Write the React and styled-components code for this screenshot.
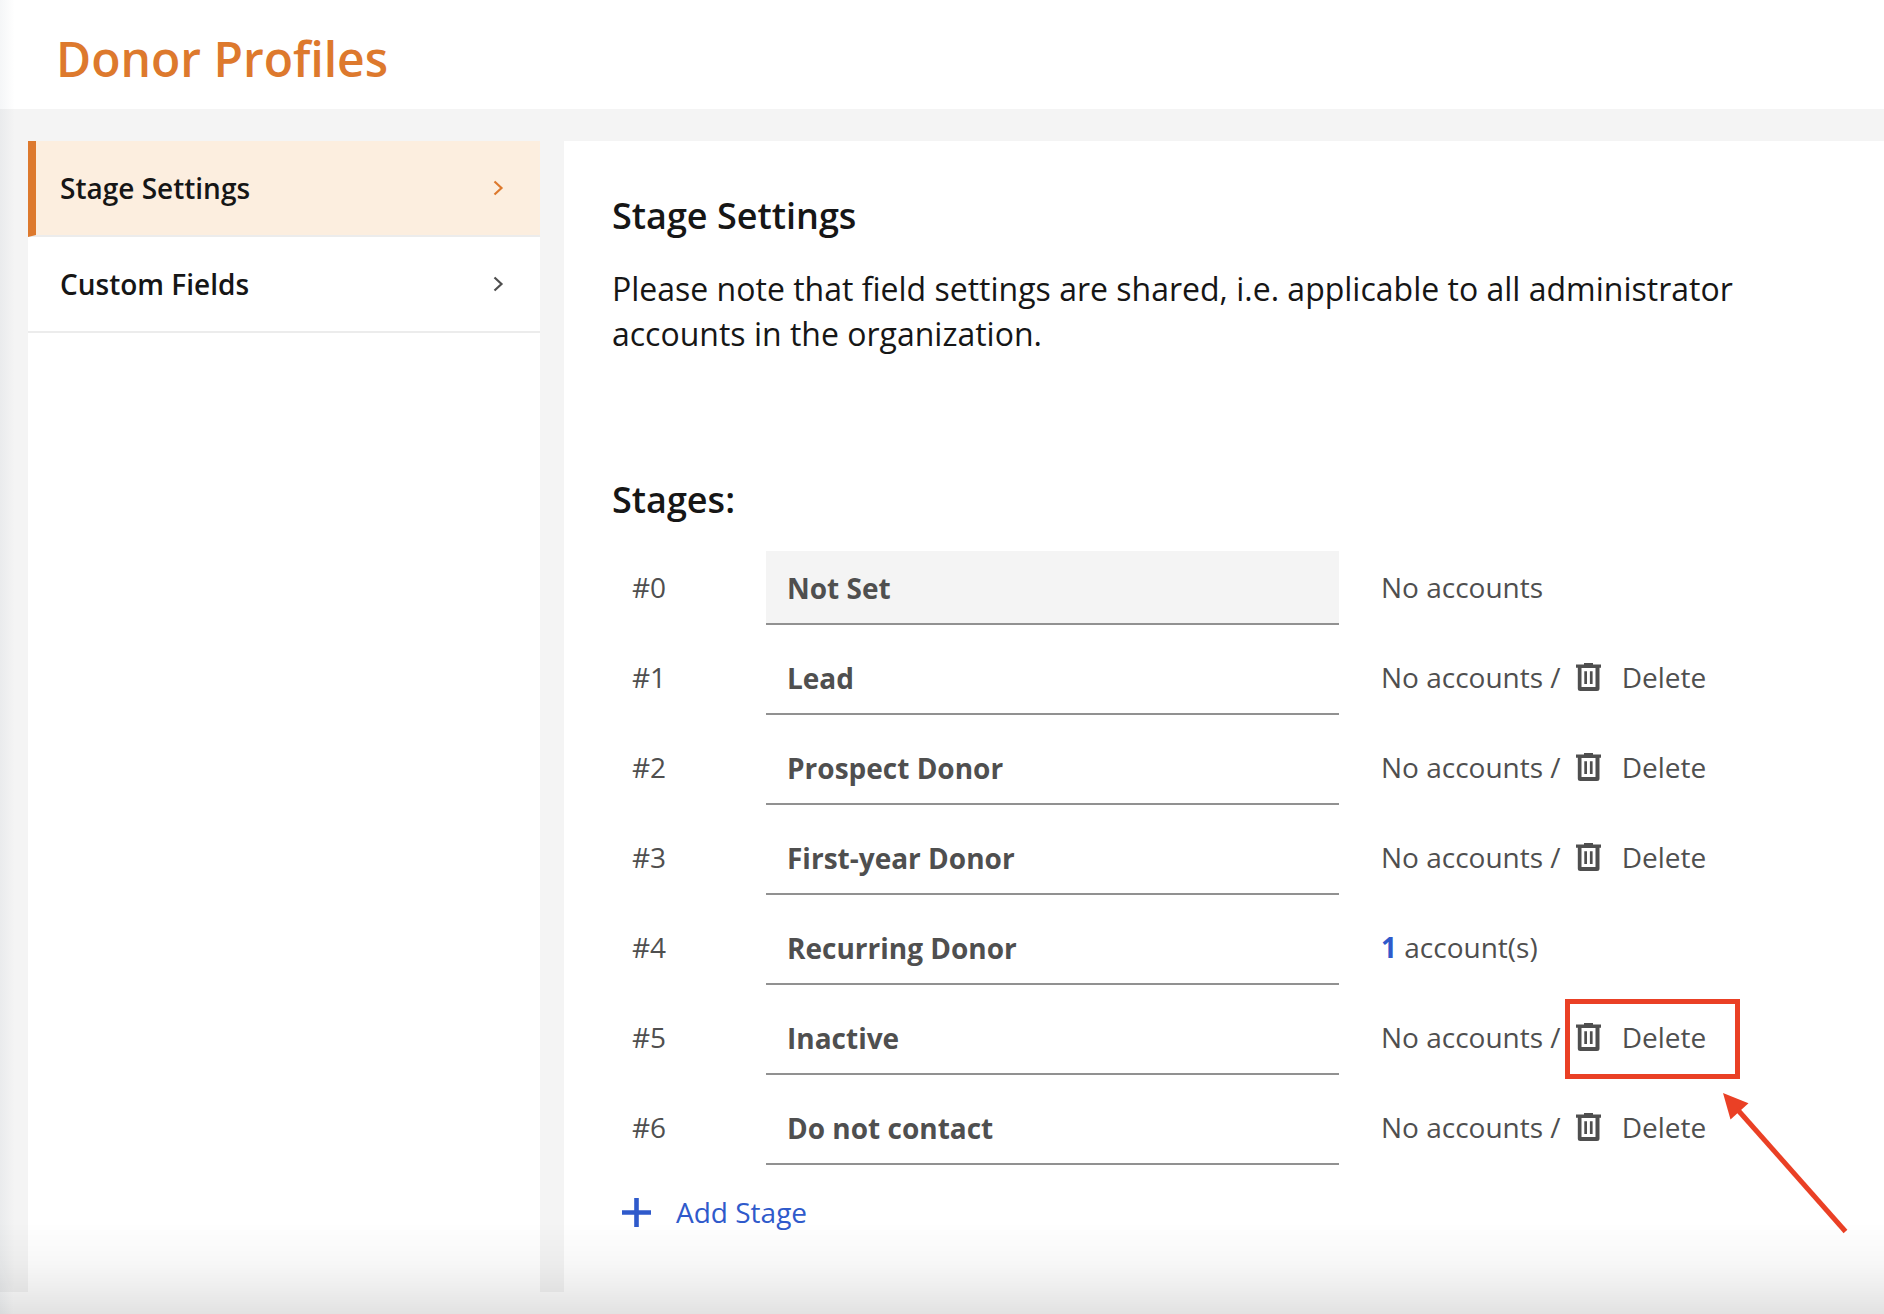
import React, { useState } from "react";
import styled, { createGlobalStyle } from "styled-components";

const color = {
  orange: "#dd792d",
  orangePale: "#fceedf",
  page: "#f4f4f4",
  ink: "#161616",
  text: "#4f4f4f",
  rule: "#919191",
  divider: "#ececec",
  blue: "#2f5acb",
  red: "#ea4025",
};

const GlobalStyle = createGlobalStyle`
  *, *::before, *::after { box-sizing: border-box; }
  body {
    margin: 0;
    background: #fff;
    color: ${color.ink};
    font-family: "Open Sans", "Noto Sans", sans-serif;
    font-size: 28px;
  }
  button, input { font: inherit; }
`;

const Page = styled.div`
  display: flex;
  flex-direction: column;
  min-height: 100vh;
  padding-bottom: 22px;
`;

/* Soft shadows cast on the content by the surrounding app frame. */
const FrameShadow = styled.div`
  position: fixed;
  inset: 0;
  pointer-events: none;
  background:
    linear-gradient(to right, rgba(70, 95, 120, 0.06), rgba(70, 95, 120, 0) 14px),
    linear-gradient(
      to top,
      rgba(0, 0, 0, 0.115),
      rgba(0, 0, 0, 0.075) 22px,
      rgba(0, 0, 0, 0.03) 50px,
      rgba(0, 0, 0, 0) 92px
    );
`;

const Header = styled.header`
  padding: 35px 56px 26px;
`;

const PageTitle = styled.h1`
  margin: 0;
  color: ${color.orange};
  font-size: 48px;
  font-weight: 600;
  line-height: 48px;
`;

const Body = styled.div`
  flex: 1;
  display: grid;
  grid-template-columns: 512px minmax(0, 1fr);
  gap: 24px;
  padding: 32px 0 0 28px;
  background: ${color.page};
`;

const SideNav = styled.nav`
  background: #fff;
`;

const NavLink = styled.a`
  display: flex;
  align-items: center;
  justify-content: space-between;
  height: 96px;
  padding: 0 36px 0 ${(p) => (p.$active ? 24 : 32)}px;
  border-left: ${(p) => (p.$active ? `8px solid ${color.orange}` : "0")};
  border-bottom: 2px solid ${color.divider};
  background: ${(p) => (p.$active ? color.orangePale : "#fff")};
  color: ${color.ink};
  font-weight: 600;
  text-decoration: none;

  svg {
    color: ${(p) => (p.$active ? color.orange : color.text)};
  }
`;

const Panel = styled.main`
  padding: 51px 48px 56px;
  background: #fff;
`;

const SectionTitle = styled.h2`
  margin: 0;
  font-size: 36px;
  font-weight: 600;
  line-height: 48px;
`;

const Note = styled.p`
  margin: 26px 0 120px;
  font-size: 32px;
  line-height: 45px;
`;

const StageTable = styled.table`
  width: 100%;
  margin-top: 27px;
  border-collapse: collapse;
  table-layout: fixed;
  color: ${color.text};
`;

const IndexCol = styled.col`
  width: 154px;
`;

const NameCol = styled.col`
  width: 573px;
`;

const Cell = styled.td`
  height: 90px;
  padding: 0 0 0 ${(p) => p.$indent || 0}px;
  vertical-align: top;
  line-height: 72px;
  white-space: nowrap;
`;

const StageInput = styled.input`
  display: block;
  width: 100%;
  height: 74px;
  padding: 2px 21px 0;
  border: 0;
  border-bottom: 2px solid ${color.rule};
  border-radius: 0;
  outline: 0;
  background: #fff;
  color: ${color.text};
  font-weight: 700;

  &:disabled {
    background: ${color.page};
    opacity: 1;
  }
`;

const Usage = styled.div`
  display: flex;
  align-items: center;
  gap: 15px;
  height: 72px;
`;

const AccountLink = styled.a`
  color: ${color.blue};
  font-weight: 700;
  text-decoration: none;
`;

const DeleteButton = styled.button`
  display: flex;
  align-items: center;
  gap: 21px;
  padding: 0;
  border: 0;
  background: none;
  color: inherit;
  line-height: 40px;
  cursor: pointer;
`;

const Spotlit = styled.div`
  position: relative;
`;

const SpotlightBox = styled.span`
  position: absolute;
  top: -18px;
  left: -11px;
  width: 175px;
  height: 80px;
  border: 5px solid ${color.red};
  pointer-events: none;
`;

const SpotlightArrow = styled.svg`
  position: absolute;
  top: 76px;
  left: 147px;
  pointer-events: none;
`;

const AddButton = styled.button`
  display: flex;
  align-items: center;
  gap: 25px;
  height: 48px;
  margin-top: 7px;
  padding: 0 10px;
  border: 0;
  background: none;
  color: ${color.blue};
  cursor: pointer;
`;

const Chevron = () => (
  <svg width="12" height="16" viewBox="0 0 12 16" fill="none" aria-hidden="true">
    <path d="M2.500 1.500 9.500 8l-7 6.500" stroke="currentColor" strokeWidth="2.200" />
  </svg>
);

const TrashIcon = () => (
  <svg width="25" height="28" viewBox="0 0 25 28" fill="currentColor" aria-hidden="true">
    <path
      fillRule="evenodd"
      d="M8 0h9v1.500h8v3.200h-1.500V25.500a2.500 2.500 0 0 1-2.500 2.500H4.300a2.500 2.500 0 0 1-2.500-2.500V4.700H0V1.500h8zM5.500 5v19h14V5z"
    />
    <path d="M8.300 8.200h2.700v12.800H8.300zM13.900 8.200h2.700v12.800h-2.700z" />
  </svg>
);

const PlusIcon = () => (
  <svg width="29" height="29" viewBox="0 0 29 29" fill="currentColor" aria-hidden="true">
    <path d="M12.200 0h4.600v12.200H29v4.600H16.800V29h-4.600V16.800H0v-4.600h12.200z" />
  </svg>
);

const Arrow = () => (
  <SpotlightArrow width="130" height="146" viewBox="0 0 130 146" aria-hidden="true">
    <path d="M0 0 25.500 10.300 7.500 26.500z" fill={color.red} />
    <path d="M14 16 122.500 138.500" stroke={color.red} strokeWidth="5" />
  </SpotlightArrow>
);

const initialStages = [
  { name: "Not Set", accounts: 0, locked: true },
  { name: "Lead", accounts: 0 },
  { name: "Prospect Donor", accounts: 0 },
  { name: "First-year Donor", accounts: 0 },
  { name: "Recurring Donor", accounts: 1 },
  { name: "Inactive", accounts: 0, spotlight: true },
  { name: "Do not contact", accounts: 0 },
];

function StageUsage({ stage, onDelete }) {
  if (stage.accounts > 0) {
    return (
      <Usage>
        <span>
          <AccountLink href="#accounts">{stage.accounts}</AccountLink> account(s)
        </span>
      </Usage>
    );
  }
  if (stage.locked) {
    return <Usage>No accounts</Usage>;
  }
  const button = (
    <DeleteButton type="button" onClick={onDelete}>
      <TrashIcon />
      Delete
    </DeleteButton>
  );
  return (
    <Usage>
      <span>No accounts /</span>
      {stage.spotlight ? (
        <Spotlit>
          {button}
          <SpotlightBox />
          <Arrow />
        </Spotlit>
      ) : (
        button
      )}
    </Usage>
  );
}

export default function App() {
  const [stages, setStages] = useState(initialStages);

  const rename = (index, name) =>
    setStages(stages.map((s, i) => (i === index ? { ...s, name } : s)));
  const remove = (index) => setStages(stages.filter((_, i) => i !== index));
  const add = () => setStages([...stages, { name: "", accounts: 0 }]);

  return (
    <>
      <GlobalStyle />
      <Page>
        <Header>
          <PageTitle>Donor Profiles</PageTitle>
        </Header>
        <Body>
          <SideNav>
            <NavLink href="#stages" $active aria-current="page">
              Stage Settings
              <Chevron />
            </NavLink>
            <NavLink href="#fields">
              Custom Fields
              <Chevron />
            </NavLink>
          </SideNav>
          <Panel>
            <SectionTitle>Stage Settings</SectionTitle>
            <Note>
              Please note that field settings are shared, i.e. applicable to all
              administrator accounts in the organization.
            </Note>
            <SectionTitle id="stages-title">Stages:</SectionTitle>
            <StageTable aria-labelledby="stages-title">
              <colgroup>
                <IndexCol />
                <NameCol />
                <col />
              </colgroup>
              <tbody>
                {stages.map((stage, i) => (
                  <tr key={i}>
                    <Cell $indent={20}>
                      <label htmlFor={`stage-${i}`}>#{i}</label>
                    </Cell>
                    <Cell>
                      <StageInput
                        id={`stage-${i}`}
                        type="text"
                        value={stage.name}
                        disabled={stage.locked}
                        onChange={(e) => rename(i, e.target.value)}
                      />
                    </Cell>
                    <Cell $indent={42}>
                      <StageUsage stage={stage} onDelete={() => remove(i)} />
                    </Cell>
                  </tr>
                ))}
              </tbody>
            </StageTable>
            <AddButton type="button" onClick={add}>
              <PlusIcon />
              Add Stage
            </AddButton>
          </Panel>
        </Body>
      </Page>
      <FrameShadow />
    </>
  );
}
